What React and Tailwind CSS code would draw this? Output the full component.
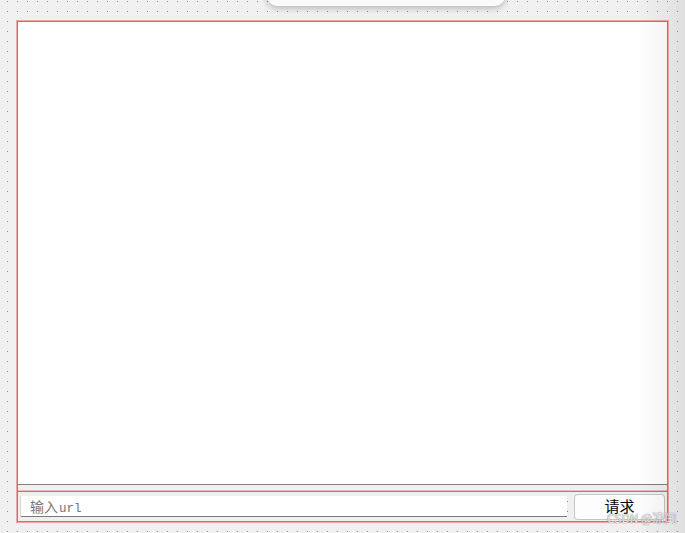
import React from 'react';

const cjk = '"Noto Sans CJK SC", "Noto Sans", sans-serif';

function DotCanvas({ children }) {
  return (
    <div className="relative w-[685px] h-[533px] overflow-hidden bg-[#f0f0f0] bg-[radial-gradient(circle_at_0.5px_0.5px,#8e8e8e_0.8px,transparent_0.9px)] bg-size-[10px_10px] bg-position-[7px_1px]">
      {children}
    </div>
  );
}

export default function App() {
  return (
    <DotCanvas>
      {/* floating toolbar peeking in from the top */}
      <div className="absolute left-[267px] top-[-14px] w-[238px] h-[20px] rounded-b-[10px] bg-[#fafafa] shadow-[0_2px_6px_rgba(0,0,0,0.25)]" />

      {/* form, outlined like a layout in the designer */}
      <div className="ml-[18px] mt-[22px] w-[649px] h-[499px] flex flex-col shadow-[0_0_0_1px_#f25c5c,0_0_0_2px_rgba(242,92,92,0.5)]">
        <div className="h-[463px] bg-white shadow-[inset_0_-1px_0_0_#808080]" />
        <div className="h-[7px]" />
        <div className="h-[29px] flex items-center shadow-[0_-1px_0_0_#f25c5c,0_-2px_0_0_rgba(242,92,92,0.35)] pl-[2px] pr-[1px]">
          <div className="w-[547px] h-[21px] flex items-baseline pt-[1px] bg-white shadow-[inset_1px_0_0_0_#d8d8d8,inset_0_-1px_0_0_#7a7a7a] pl-[10px] text-[#767676]">
            <span className="text-[14px] leading-[18px]" style={{ fontFamily: cjk }}>输入</span>
            <span className="text-[12.5px] leading-[18px] ml-[1px]" style={{ fontFamily: '"Liberation Mono", monospace' }}>url</span>
          </div>
          <div className="ml-[7px] w-[91px] h-[26px] flex items-center justify-center pb-[3px] rounded-[4px] shadow-[inset_0_0_0_1px_#c6c6c6] bg-[#fdfdfd] text-black text-[15px] leading-none" style={{ fontFamily: cjk }}>
            请求
          </div>
        </div>
      </div>

      {/* soft shade along the right edge */}
      <div className="pointer-events-none absolute right-0 top-0 w-[48px] h-full bg-gradient-to-r from-transparent to-black/[0.07]" />

      {/* watermark */}
      <div className="pointer-events-none absolute left-[607px] top-[512px] text-[12px] leading-none text-white/80 [text-shadow:0_0_1px_#8a8a8a,0_0_1px_#8a8a8a]" style={{ fontFamily: cjk }}>
        CSDN @凉闰
      </div>
    </DotCanvas>
  );
}
